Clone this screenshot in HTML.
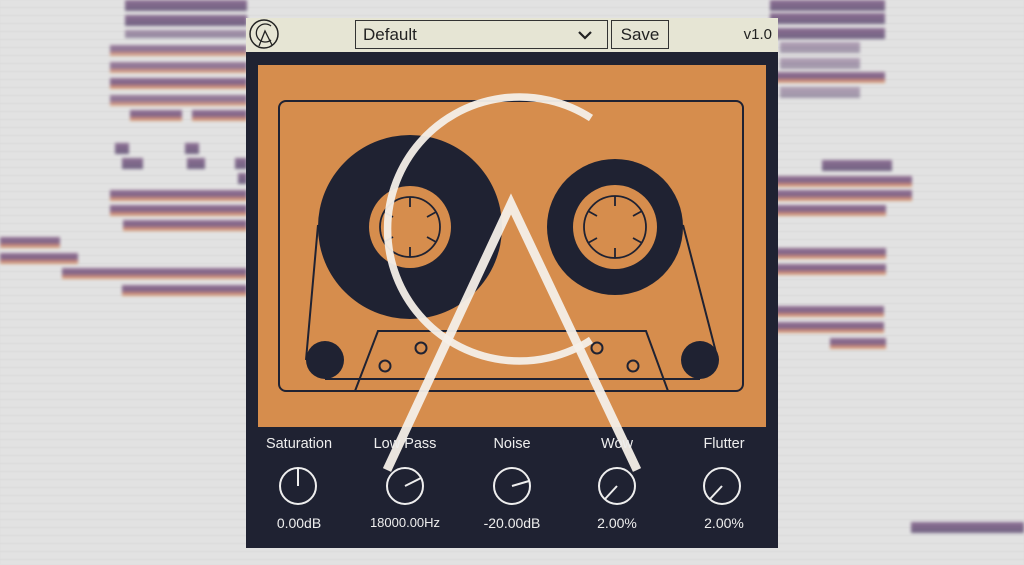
<!DOCTYPE html>
<html><head><meta charset="utf-8"><style>
html,body{margin:0;padding:0;width:1024px;height:565px;overflow:hidden;background:#dcdcdc;font-family:"Liberation Sans",sans-serif}
.bg{position:absolute;left:0;top:0;width:1024px;height:565px;
background:repeating-linear-gradient(180deg,#e2e2e2 0 7px,#dadada 7px 8px),#e0e0e0;filter:blur(0.6px)}
.b{position:absolute;height:11px;background:linear-gradient(180deg,#8a5f86 0%,#6c4f7a 45%,#c87a6a 80%,#e0a86a 100%);filter:blur(1.6px);opacity:.85}
.p{background:linear-gradient(180deg,#7d5a85,#5e4e72);}
#plug{position:absolute;left:246px;top:18px;width:532px;height:530px;background:#1f2232}
#hdr{position:absolute;left:0;top:0;width:532px;height:34px;background:#e6e5d4}
.box{position:absolute;top:2px;height:29px;border:1.5px solid #333;box-sizing:border-box;font-size:17px;color:#222;line-height:27px}
.lbl{position:absolute;color:#eee;font-size:14.5px;text-align:center;width:110px}
</style></head><body>
<div class="bg"></div>
<!-- left blocks -->
<div class="b p" style="left:125px;top:0;width:122px"></div>
<div class="b p" style="left:125px;top:15px;width:122px"></div>
<div class="b p" style="left:125px;top:30px;width:122px;height:8px;opacity:.6"></div>
<div class="b" style="left:110px;top:45px;width:137px;opacity:.75"></div>
<div class="b" style="left:110px;top:62px;width:137px;opacity:.75"></div>
<div class="b" style="left:110px;top:78px;width:137px"></div>
<div class="b" style="left:110px;top:95px;width:137px;opacity:.75"></div>
<div class="b" style="left:130px;top:110px;width:52px"></div>
<div class="b" style="left:192px;top:110px;width:55px"></div>
<div class="b p" style="left:115px;top:143px;width:14px"></div>
<div class="b p" style="left:185px;top:143px;width:14px"></div>
<div class="b p" style="left:122px;top:158px;width:21px"></div>
<div class="b p" style="left:187px;top:158px;width:18px"></div>
<div class="b p" style="left:235px;top:158px;width:12px"></div>
<div class="b p" style="left:238px;top:173px;width:9px"></div>
<div class="b" style="left:110px;top:190px;width:137px"></div>
<div class="b" style="left:110px;top:205px;width:137px"></div>
<div class="b" style="left:123px;top:220px;width:124px"></div>
<div class="b" style="left:0;top:237px;width:60px"></div>
<div class="b" style="left:0;top:253px;width:78px"></div>
<div class="b" style="left:62px;top:268px;width:185px"></div>
<div class="b" style="left:122px;top:285px;width:125px"></div>
<!-- right blocks -->
<div class="b p" style="left:770px;top:0;width:115px"></div>
<div class="b p" style="left:770px;top:13px;width:115px"></div>
<div class="b p" style="left:770px;top:28px;width:115px"></div>
<div class="b p" style="left:780px;top:42px;width:80px;opacity:.5"></div>
<div class="b p" style="left:780px;top:58px;width:80px;opacity:.5"></div>
<div class="b" style="left:770px;top:72px;width:115px"></div>
<div class="b p" style="left:780px;top:87px;width:80px;opacity:.5"></div>
<div class="b p" style="left:822px;top:160px;width:70px"></div>
<div class="b" style="left:770px;top:176px;width:142px"></div>
<div class="b" style="left:770px;top:190px;width:142px"></div>
<div class="b" style="left:770px;top:205px;width:116px"></div>
<div class="b" style="left:770px;top:248px;width:116px"></div>
<div class="b" style="left:770px;top:264px;width:116px"></div>
<div class="b" style="left:770px;top:306px;width:114px"></div>
<div class="b" style="left:770px;top:322px;width:114px"></div>
<div class="b" style="left:830px;top:338px;width:56px"></div>
<div class="b p" style="left:911px;top:522px;width:113px"></div>

<div id="plug">
<div id="hdr">
<svg style="position:absolute;left:0;top:0" width="40" height="34"><circle cx="18" cy="16" r="14" fill="none" stroke="#222" stroke-width="1.5"/><path d="M25 8 A9 9 0 1 0 25 22" fill="none" stroke="#222" stroke-width="1.3"/><path d="M13 28 L19 13 L26 27" fill="none" stroke="#222" stroke-width="1.3"/></svg>
<div class="box" style="left:109px;width:253px;padding-left:7px">Default
<svg style="position:absolute;right:14px;top:9px" width="16" height="10"><path d="M2 2 L8 8 L14 2" fill="none" stroke="#222" stroke-width="2.2"/></svg></div>
<div class="box" style="left:365px;width:58px;text-align:center">Save</div>
<div style="position:absolute;right:6px;top:8px;font-size:15px;color:#222">v1.0</div>
</div>
<svg style="position:absolute;left:0;top:0" width="532" height="530" viewBox="246 18 532 530">
<rect x="258" y="65" width="508" height="362" fill="#d68d4d"/>
<g fill="none" stroke="#1f2232" stroke-width="2">
<rect x="279" y="101" width="464" height="290" rx="7"/>
<path d="M318 225 L306 360 M683 225 L718 360 M325 379 L700 379"/>
<path d="M355 391 L378 331 L646 331 L668 391"/>
<circle cx="385" cy="366" r="5.5"/><circle cx="421" cy="348" r="5.5"/><circle cx="597" cy="348" r="5.5"/><circle cx="633" cy="366" r="5.5"/>
</g>
<circle cx="410" cy="227" r="92" fill="#1f2232"/>
<circle cx="410" cy="227" r="41" fill="#d68d4d"/>
<circle cx="615" cy="227" r="68" fill="#1f2232"/>
<circle cx="615" cy="227" r="42" fill="#d68d4d"/>
<circle cx="325" cy="360" r="19" fill="#1f2232"/>
<circle cx="700" cy="360" r="19" fill="#1f2232"/>
<g fill="none" stroke="#1f2232" stroke-width="1.8">
<circle cx="410" cy="227" r="30"/><circle cx="615" cy="227" r="31"/>
<path d="M410 197 V207 M436 212 L427 217 M436 242 L427 237 M410 257 V247 M384 242 L393 237 M384 212 L393 217"/>
<path d="M615 196 V206 M642 211 L633 216 M642 243 L633 238 M615 258 V248 M588 243 L597 238 M588 211 L597 216"/>
</g>
<path d="M591 118 A132 132 0 1 0 591 340" fill="none" stroke="#f4efe8" stroke-width="7.5" opacity=".95"/>
<path d="M387 470 L511 204 L637 470" fill="none" stroke="#f4efe8" stroke-width="9" stroke-linejoin="miter" stroke-miterlimit="10" opacity=".95"/>
<g fill="none" stroke="#eee" stroke-width="2">
<circle cx="298" cy="486" r="18"/><path d="M298 486 V468"/>
<circle cx="405" cy="486" r="18"/><path d="M405 486 L421 478"/>
<circle cx="512" cy="486" r="18"/><path d="M512 486 L529 481"/>
<circle cx="617" cy="486" r="18"/><path d="M617 486 L605 499"/>
<circle cx="722" cy="486" r="18"/><path d="M722 486 L710 499"/>
</g>
</svg>
<div class="lbl" style="left:-2px;top:418px">Saturation</div>
<div class="lbl" style="left:104px;top:418px">Low Pass</div>
<div class="lbl" style="left:211px;top:418px">Noise</div>
<div class="lbl" style="left:316px;top:418px">Wow</div>
<div class="lbl" style="left:423px;top:418px">Flutter</div>
<div class="lbl" style="left:-2px;top:497px;font-size:14px">0.00dB</div>
<div class="lbl" style="left:104px;top:497px;font-size:13px">18000.00Hz</div>
<div class="lbl" style="left:211px;top:497px;font-size:14px">-20.00dB</div>
<div class="lbl" style="left:316px;top:497px;font-size:14px">2.00%</div>
<div class="lbl" style="left:423px;top:497px;font-size:14px">2.00%</div>
</div>
</body></html>
